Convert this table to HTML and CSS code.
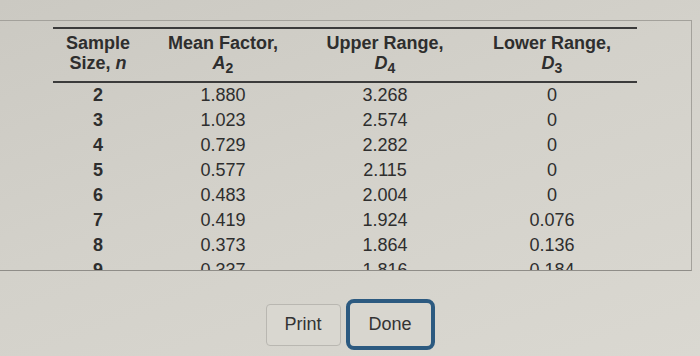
FILE: index.html
```html
<!DOCTYPE html>
<html>
<head>
<meta charset="utf-8">
<link rel="stylesheet" href="styles.css">
</head>
<body>
<div class="page">
  <div class="scrollbox">
    <table class="factors">
      <thead>
        <tr>
          <th class="c1">Sample<br>Size, <i>n</i></th>
          <th class="c2">Mean Factor,<br><i>A</i><sub>2</sub></th>
          <th class="c3">Upper Range,<br><i>D</i><sub>4</sub></th>
          <th class="c4">Lower Range,<br><i>D</i><sub>3</sub></th>
        </tr>
      </thead>
      <tbody>
        <tr><td class="n">2</td><td>1.880</td><td>3.268</td><td>0</td></tr>
        <tr><td class="n">3</td><td>1.023</td><td>2.574</td><td>0</td></tr>
        <tr><td class="n">4</td><td>0.729</td><td>2.282</td><td>0</td></tr>
        <tr><td class="n">5</td><td>0.577</td><td>2.115</td><td>0</td></tr>
        <tr><td class="n">6</td><td>0.483</td><td>2.004</td><td>0</td></tr>
        <tr><td class="n">7</td><td>0.419</td><td>1.924</td><td>0.076</td></tr>
        <tr><td class="n">8</td><td>0.373</td><td>1.864</td><td>0.136</td></tr>
        <tr><td class="n">9</td><td>0.337</td><td>1.816</td><td>0.184</td></tr>
        <tr><td class="n">10</td><td>0.308</td><td>1.777</td><td>0.223</td></tr>
      </tbody>
    </table>
  </div>
  <div class="actions">
    <button class="btn print">Print</button>
    <button class="btn done">Done</button>
  </div>
</div>
</body>
</html>
```
FILE: styles.css
```css
html, body {
  margin: 0;
  padding: 0;
}
body {
  width: 700px;
  height: 356px;
  overflow: hidden;
  background: linear-gradient(160deg, #cbc9c2 0%, #d3d1ca 45%, #dad8d1 100%);
  font-family: "Liberation Sans", Arial, sans-serif;
  color: #2e2e2e;
}
.page {
  padding-top: 20px;
}
.scrollbox {
  width: 692px;
  height: 251px;
  border-top: 1px solid #a3a19b;
  border-right: 1px solid #a3a19b;
  border-bottom: 1px solid #8f8d88;
  overflow: hidden;
  padding-top: 6px;
  box-sizing: border-box;
}
.factors {
  margin-left: 53px;
  width: 584px;
  border-collapse: collapse;
  font-size: 18px;
}
.factors thead tr {
  border-top: 2px solid #3b3b3b;
  border-bottom: 2px solid #3b3b3b;
}
.factors th {
  font-weight: bold;
  line-height: 20px;
  padding: 4px 0 8px;
  vertical-align: top;
  text-align: center;
}
.factors th sub {
  font-size: 14px;
  line-height: 0;
  vertical-align: -4px;
}
.c1 { width: 90px; }
.c2 { width: 160px; }
.c3 { width: 164px; }
.c4 { width: 170px; }
.factors td {
  text-align: center;
  height: 25px;
  padding: 0;
  line-height: 25px;
}
.factors td.n {
  font-weight: bold;
}
.actions {
  display: flex;
  justify-content: center;
  align-items: center;
  gap: 5px;
  margin-top: 28px;
}
.btn {
  font-family: "Liberation Sans", Arial, sans-serif;
  font-size: 18px;
  color: #333;
  padding: 0;
  box-sizing: border-box;
  cursor: pointer;
}
.print {
  width: 75px;
  height: 42px;
  background: #d9d7d0;
  border: 1px solid #b9b7b1;
  border-radius: 4px;
}
.done {
  width: 89px;
  height: 51px;
  background: #d8d6cf;
  border: 4px solid #2c5a80;
  border-radius: 8px;
}
```
